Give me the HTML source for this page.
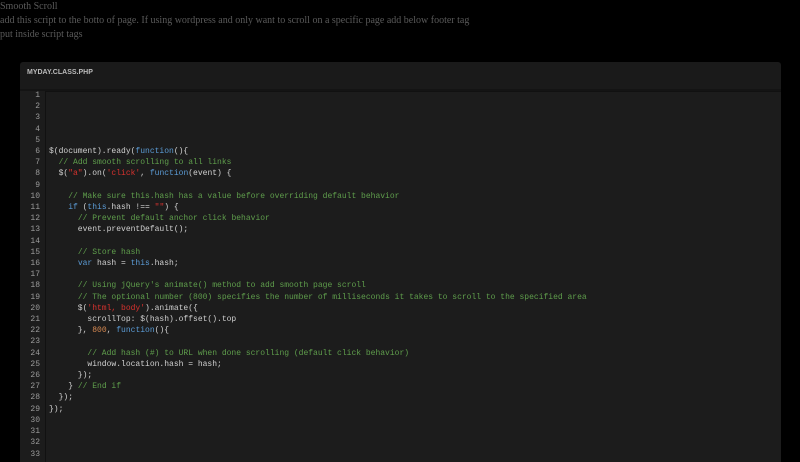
<!DOCTYPE html>
<html><head><style>
body{margin:0;background:#000;width:800px;height:450px;overflow:hidden;font-family:"Liberation Serif",serif;}
.t{color:#5a5a5a;font-size:10px;line-height:14px;position:absolute;left:0;top:0;}
.box{position:absolute;left:20px;top:62px;width:761px;height:400px;background:#1a1a1a;border-radius:3px;}
.h{position:absolute;left:7px;top:7px;font:bold 7px "Liberation Sans",sans-serif;color:#bbb;}
.code{position:absolute;left:0;top:27px;right:0;bottom:0;background:#1c1c1c;border-top:2px solid #141414;}
.g{position:absolute;left:0;top:0;width:25px;bottom:0;}
.c{position:absolute;left:25px;top:0;right:0;bottom:0;border-left:1px solid #111;border-top:1px solid #111;}
pre{margin:0;font:8px/11.2px "Liberation Mono",monospace;color:#d0d0d0;position:absolute;top:-1px;}
.n{right:5px;text-align:right;color:#9a9a9a;}
.cc{color:#5f9e4c}.k{color:#5b9bd5}.s{color:#d8322e}.o{color:#d88a52}
</style></head><body>
<div class="t">Smooth Scroll<br>add this script to the botto of page. If using wordpress and only want to scroll on a specific page add below footer tag<br>put inside script tags</div>
<div class="box"><div class="h">MYDAY.CLASS.PHP</div>
<div class="code"><div class="g"><pre class="n" style="left:0;width:20px">1
2
3
4
5
6
7
8
9
10
11
12
13
14
15
16
17
18
19
20
21
22
23
24
25
26
27
28
29
30
31
32
33</pre></div>
<div class="c"><pre style="left:3px;top:-2px">





$(document).ready(<span class="k">function</span>(){
  <span class="cc">// Add smooth scrolling to all links</span>
  $(<span class="s">"a"</span>).on(<span class="s">'click'</span>, <span class="k">function</span>(event) {

    <span class="cc">// Make sure this.hash has a value before overriding default behavior</span>
    <span class="k">if</span> (<span class="k">this</span>.hash !== <span class="s">""</span>) {
      <span class="cc">// Prevent default anchor click behavior</span>
      event.preventDefault();

      <span class="cc">// Store hash</span>
      <span class="k">var</span> hash = <span class="k">this</span>.hash;

      <span class="cc">// Using jQuery's animate() method to add smooth page scroll</span>
      <span class="cc">// The optional number (800) specifies the number of milliseconds it takes to scroll to the specified area</span>
      $(<span class="s">'html, body'</span>).animate({
        scrollTop: $(hash).offset().top
      }, <span class="o">800</span>, <span class="k">function</span>(){

        <span class="cc">// Add hash (#) to URL when done scrolling (default click behavior)</span>
        window.location.hash = hash;
      });
    } <span class="cc">// End if</span>
  });
});</pre></div></div></div>
</body></html>
